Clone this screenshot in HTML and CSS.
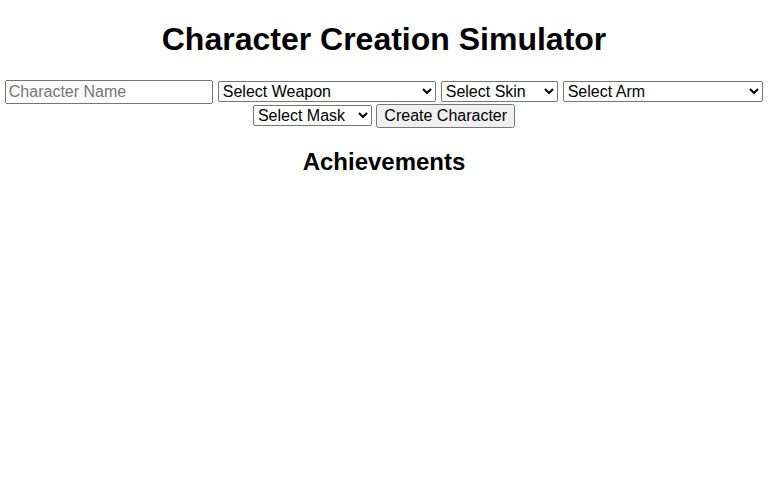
FILE: index.html
```html
<!DOCTYPE html>
<html>
<head>
<meta charset="utf-8">
<link rel="stylesheet" href="styles.css">
</head>
<body>
<h1 class="title">Character Creation Simulator</h1>
<div class="form">
<input class="name" type="text" placeholder="Character Name">
<select class="weapon"><option>Select Weapon</option></select>
<select class="skin"><option>Select Skin</option></select>
<select class="arm"><option>Select Arm</option></select>
<select class="mask"><option>Select Mask</option></select>
<button class="create">Create Character</button>
</div>
<h2 class="ach">Achievements</h2>
</body>
</html>
```
FILE: styles.css
```css
body {
  margin: 0;
  font-family: "Liberation Sans", Arial, sans-serif;
  text-align: center;
}
.form input, .form select, .form button {
  font-family: "Liberation Sans", Arial, sans-serif;
  font-size: 16px;
  box-sizing: border-box;
}
.name { width: 208.5px; }
.weapon { width: 218.5px; }
.skin { width: 117.5px; }
.arm { width: 200.5px; }
.mask { width: 119px; }
```
